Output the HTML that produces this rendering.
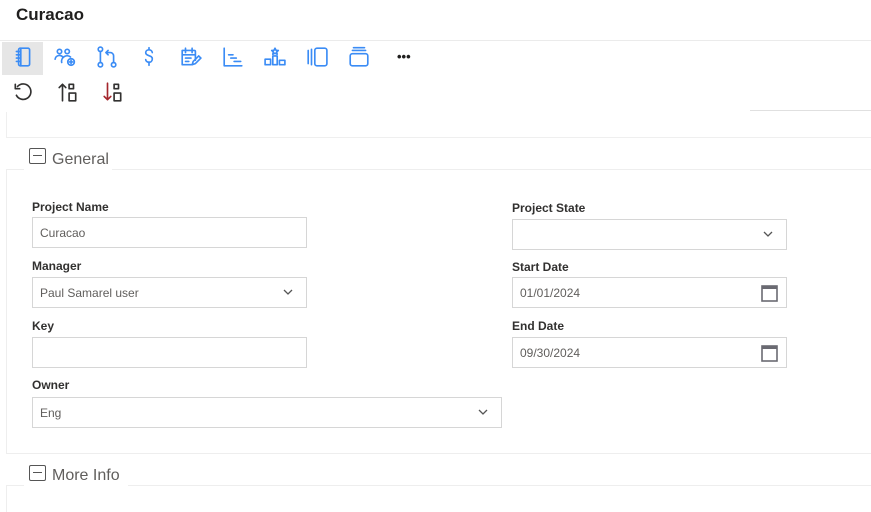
<!DOCTYPE html>
<html style="overflow:hidden;height:512px"><head><meta charset="utf-8"><style>
*{box-sizing:border-box;margin:0;padding:0}
body{width:871px;height:512px;overflow:hidden;background:#fff;font-family:"Liberation Sans",sans-serif;position:relative;color:#323130}
.a{position:absolute}
.t{left:16px;top:5px;font-size:17px;font-weight:bold;color:#201f1e}
.ic{position:absolute;width:22px;height:22px}
.ic svg{width:22px;height:22px;fill:none;stroke:#3b8cf5;stroke-width:1.5;stroke-linecap:round;stroke-linejoin:round}
.lbl{position:absolute;font-size:12px;font-weight:bold;color:#323130}
.in{position:absolute;height:31px;border:1px solid #d6d6d6;background:#fff;font-size:12px;color:#605e5c;padding:8px 0 0 7px}
.chev{position:absolute;right:12px;top:8px;width:12px;height:12px}
.cal{position:absolute;right:8px;top:6px}
</style></head><body>
<div class="a t">Curacao</div>
<div class="a" style="left:0;top:40px;width:871px;height:1px;background:#ebebeb"></div>
<div class="a" style="left:2px;top:42px;width:41px;height:33px;background:#e6e6e6"></div>

<div class="ic" style="left:12px;top:46px"><svg viewBox="0 0 20 20"><rect x="6" y="2" width="10" height="16" rx="1.5"/><path d="M4 5h4M4 8h4M4 11h4M4 14h4M8 2v16"/></svg></div>
<div class="ic" style="left:54px;top:46px"><svg viewBox="0 0 20 20"><circle cx="5" cy="5" r="2"/><circle cx="12" cy="5" r="2"/><path d="M1 12a4 4 0 0 1 7-2M7 15a5 5 0 0 1 8-5"/><circle cx="15.5" cy="14.5" r="3"/><path d="M15.5 13v3M14 14.5h3"/></svg></div>
<div class="ic" style="left:96px;top:46px"><svg viewBox="0 0 20 20"><circle cx="4" cy="3" r="2"/><circle cx="4" cy="17" r="2"/><circle cx="16" cy="17" r="2"/><path d="M4 5v10M16 15V9a3 3 0 0 0-3-3H9M11 4 9 6l2 2"/></svg></div>
<div class="ic" style="left:138px;top:46px"><svg viewBox="0 0 20 20"><path d="M13 6c0-1.5-1.5-2.5-3-2.5S7 4.3 7 6s1.5 2.3 3 2.8 3 1 3 3-1.5 3-3 3-3-1-3-2.5M10 1.5v2M10 14.5v3"/></svg></div>
<div class="ic" style="left:180px;top:46px"><svg viewBox="0 0 20 20"><path d="M14 13V5a1 1 0 0 0-1-1H2v13h8M2 8h12M5 2v4M11 2v4M5 11h5M5 14h3"/><path d="M11 17l1-3 5-5 2 2-5 5z"/></svg></div>
<div class="ic" style="left:222px;top:46px"><svg viewBox="0 0 20 20"><path d="M2 2v16h16M6 8h4M8 11h5M11 14h6"/></svg></div>
<div class="ic" style="left:264px;top:46px"><svg viewBox="0 0 20 20"><rect x="1" y="12" width="5" height="5"/><rect x="8" y="9" width="4" height="8"/><rect x="14" y="13" width="5" height="4"/><path d="M10 2l1 2h2l-1.5 1.5.5 2-2-1-2 1 .5-2L7 4h2z"/></svg></div>
<div class="ic" style="left:306px;top:46px"><svg viewBox="0 0 20 20"><rect x="8" y="2" width="11" height="16" rx="2"/><path d="M2 4v12M5 3v14"/></svg></div>
<div class="ic" style="left:348px;top:46px"><svg viewBox="0 0 20 20"><rect x="2" y="7" width="16" height="11" rx="2"/><path d="M4 4h12M5 1.5h10"/></svg></div>
<div class="a" style="left:397px;top:49px;font-size:13px;font-weight:bold;color:#201f1e">•••</div>

<div class="ic" style="left:12px;top:81px"><svg viewBox="0 0 20 20" style="stroke:#323130"><path d="M5 5a7 7 0 1 1-1 8"/><path d="M3 3v4h4"/></svg></div>
<div class="ic" style="left:57px;top:81px"><svg viewBox="0 0 20 20" style="stroke:#323130"><path d="M5 18V3M2 6l3-3 3 3"/><rect x="11" y="3" width="4" height="4"/><rect x="11" y="11" width="6" height="7"/></svg></div>
<div class="ic" style="left:102px;top:81px"><svg viewBox="0 0 20 20" style="stroke:#323130"><path d="M5 2v15M2 14l3 3 3-3" style="stroke:#a4262c"/><rect x="11" y="3" width="4" height="4"/><rect x="11" y="11" width="6" height="7"/></svg></div>

<div class="a" style="left:750px;top:110px;width:121px;height:1px;background:#e0e0e0"></div>
<div class="a" style="left:6px;top:112px;width:865px;height:26px;border:1px solid #efefef;border-top:none;border-right:none"></div>

<div class="a" style="left:6px;top:169px;width:865px;height:285px;border:1px solid #eeeeee;border-right:none"></div>
<div class="a" style="left:24px;top:160px;width:88px;height:14px;background:#fff"></div>
<div class="a" style="left:29px;top:148px;width:17px;height:16px;border:1px solid #555;border-radius:2px"><div style="position:absolute;left:3px;top:6px;width:9px;height:1px;background:#555"></div></div>
<div class="a" style="left:52px;top:151px;font-size:16px;color:#605e5c">General</div>

<div class="lbl" style="left:32px;top:200px">Project Name</div>
<div class="in" style="left:32px;top:217px;width:275px">Curacao</div>
<div class="lbl" style="left:32px;top:259px">Manager</div>
<div class="in" style="left:32px;top:277px;width:275px">Paul Samarel user<svg class="chev" viewBox="0 0 12 12"><path d="M2 4l4 4 4-4" fill="none" stroke="#555" stroke-width="1.3"/></svg></div>
<div class="lbl" style="left:32px;top:319px">Key</div>
<div class="in" style="left:32px;top:337px;width:275px"></div>
<div class="lbl" style="left:32px;top:378px">Owner</div>
<div class="in" style="left:32px;top:397px;width:470px">Eng<svg class="chev" viewBox="0 0 12 12"><path d="M2 4l4 4 4-4" fill="none" stroke="#555" stroke-width="1.3"/></svg></div>

<div class="lbl" style="left:512px;top:201px">Project State</div>
<div class="in" style="left:512px;top:219px;width:275px"><svg class="chev" viewBox="0 0 12 12"><path d="M2 4l4 4 4-4" fill="none" stroke="#555" stroke-width="1.3"/></svg></div>
<div class="lbl" style="left:512px;top:260px">Start Date</div>
<div class="in" style="left:512px;top:277px;width:275px">01/01/2024<svg class="cal" width="17" height="18" viewBox="0 0 17 18"><rect x="1" y="2" width="15" height="15" fill="none" stroke="#6a6a72" stroke-width="1.6"/><rect x="1" y="2" width="15" height="3" fill="#6a6a72"/></svg></div>
<div class="lbl" style="left:512px;top:319px">End Date</div>
<div class="in" style="left:512px;top:337px;width:275px">09/30/2024<svg class="cal" width="17" height="18" viewBox="0 0 17 18"><rect x="1" y="2" width="15" height="15" fill="none" stroke="#6a6a72" stroke-width="1.6"/><rect x="1" y="2" width="15" height="3" fill="#6a6a72"/></svg></div>

<div class="a" style="left:6px;top:485px;width:865px;height:27px;border-top:1px solid #eeeeee;border-left:1px solid #eeeeee"></div>
<div class="a" style="left:24px;top:476px;width:104px;height:14px;background:#fff"></div>
<div class="a" style="left:29px;top:465px;width:17px;height:16px;border:1px solid #555;border-radius:2px"><div style="position:absolute;left:3px;top:6px;width:9px;height:1px;background:#555"></div></div>
<div class="a" style="left:52px;top:467px;font-size:16px;color:#605e5c">More Info</div>
</body></html>
